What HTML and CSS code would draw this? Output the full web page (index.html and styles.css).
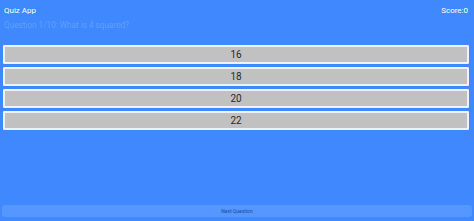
FILE: index.html
```html
<!DOCTYPE html>
<html lang="en">
<head>
    <meta charset="UTF-8">
    <meta name="viewport" content="width=device-width, initial-scale=1.0">
    <title>Quiz App</title>
    <link rel="stylesheet" href="styles.css">
</head>
<body>
    <div class="app">
        <div class="header">
            <span class="title">Quiz App</span>
            <span class="score">Score:0</span>
        </div>
        <div class="question">Question 1/10: What is 4 squared?</div>
        <div class="options">
            <button class="option">16</button>
            <button class="option">18</button>
            <button class="option">20</button>
            <button class="option">22</button>
        </div>
        <button class="next">Next Question</button>
    </div>
</body>
</html>
```

FILE: styles.css
```css
body{
    margin:0;
    background-color: #3f88fd;
    font-family: Roboto, "Liberation Sans", Arial, sans-serif;
}
.app{
    display:flex;
    flex-direction: column;
    height:100vh;
}
.header{
    display:flex;
    justify-content: space-between;
    align-items: center;
    padding:5px 6px 0 4px;
    height:11px;
    color:#ffffff;
    font-size:8px;
}
.question{
    padding:4px 4px 0 4px;
    font-size:8.2px;
    color:#60a0ff;
    height:13px;
}
.options{
    display:flex;
    flex-direction: column;
    gap:3px;
    padding:12px 5px 0 3px;
}
.option{
    height:19px;
    margin:0;
    padding:0;
    border:2px solid #eef3fb;
    border-radius:1px;
    background-color: #c1c1c1;
    color:#2a2a2a;
    font-family: Roboto, "Liberation Sans", Arial, sans-serif;
    font-size:10px;
}
.next{
    margin:auto 2px 4px 2px;
    height:12px;
    padding:0;
    border:none;
    border-radius:3px;
    background-color: #5596ff;
    color:#1d4c9c;
    font-family: Roboto, "Liberation Sans", Arial, sans-serif;
    font-size:5px;
}
```
